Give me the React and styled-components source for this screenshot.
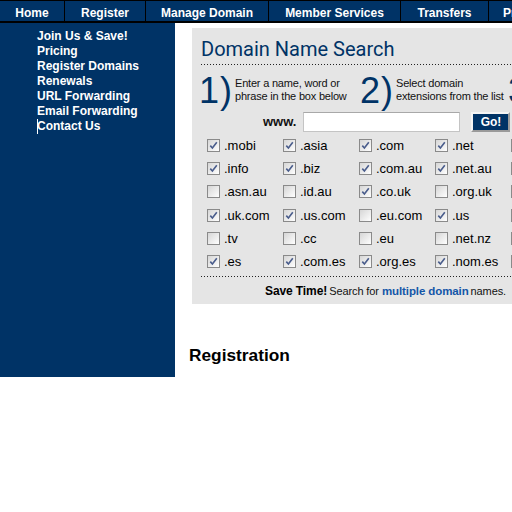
import React from "react";
import styled, { createGlobalStyle } from "styled-components";

const Global = createGlobalStyle`
  html, body { margin: 0; padding: 0; background: #fff; }
  body { font-family: "Liberation Sans", Arial, sans-serif; }
`;

const Page = styled.div`
  width: 100%;
  overflow: hidden;
`;

const NavBar = styled.nav`
  display: flex;
  background: #003366;
  border-top: 1px solid #000;
  border-bottom: 2px solid #000;
  height: 20px;
  white-space: nowrap;
`;

const NavItem = styled.a`
  flex-shrink: 0;
  display: flex;
  align-items: center;
  justify-content: center;
  box-sizing: border-box;
  width: ${(p) => (p.$w ? `${p.$w + 1}px` : "auto")};
  padding: ${(p) => (p.$w ? "3px 0 0" : "3px 14px 0")};
  height: 20px;
  border-right: 1px solid #000;
  color: #fff;
  font: bold 12px "Liberation Sans", Arial, sans-serif;
  text-decoration: none;
`;

const Body = styled.div`
  display: flex;
  min-height: 354px;
`;

const Sidebar = styled.aside`
  flex: 0 0 175px;
  background: #003366;
  padding: 6px 0 0 37px;
  box-sizing: border-box;
`;

const SideLink = styled.a`
  display: block;
  position: relative;
  color: #fff;
  font: bold 12px/15px "Liberation Sans", Arial, sans-serif;
  text-decoration: none;
  ${(p) =>
    p.$caret &&
    `&::before {
      content: "";
      position: absolute;
      left: 0;
      top: 0;
      width: 1px;
      height: 15px;
      background: #fff;
    }`}
`;

const Content = styled.main`
  flex: 1 0 auto;
  padding: 5px 0 0 14px;
`;

const Panel = styled.section`
  width: 420px;
  margin-left: 3px;
  background: #e5e5e5;
  padding: 9px 9px 6px;
  box-sizing: border-box;
`;

const Title = styled.h1`
  margin: 0;
  padding-bottom: 3px;
  font: normal 20px/24px Roboto, "Liberation Sans", sans-serif;
  color: #003366;
`;

const Dots = styled.div`
  height: 1px;
  margin-top: ${(p) => p.$mt || 0}px;
  background: repeating-linear-gradient(to right, #222 0 1px, transparent 1px 3px);
`;

const Steps = styled.div`
  display: grid;
  grid-template-columns: 161px 148px 200px;
  margin-top: 8px;
  margin-left: -2px;
`;

const Step = styled.div`
  display: flex;
  align-items: flex-start;
`;

const StepNum = styled.span`
  font: normal 36px/36px "Liberation Sans", Arial, sans-serif;
  color: #003366;
  white-space: nowrap;
`;

const Paren = styled.span`
  font-weight: 300;
  margin-left: 1px;
`;

const StepText = styled.span`
  margin: 4px 0 0 3px;
  font: normal 11px/13px "Liberation Sans", Arial, sans-serif;
  letter-spacing: -0.2px;
  color: #111;
  white-space: nowrap;
`;

const WwwRow = styled.div`
  display: flex;
  align-items: center;
  padding-left: 62px;
  margin-top: 2px;
`;

const WwwLabel = styled.label`
  font: bold 13px "Liberation Sans", Arial, sans-serif;
  color: #111;
  margin-right: 7px;
`;

const SearchInput = styled.input`
  box-sizing: border-box;
  width: 157px;
  height: 20px;
  border: 1px solid #c4c4c4;
  border-top-color: #a8a8a8;
  background: #fff;
  padding: 0 3px;
  margin: 0;
`;

const GoButton = styled.button`
  box-sizing: border-box;
  width: 39px;
  height: 20px;
  margin: 1px 0 0 11px;
  padding: 0;
  background: #003366;
  color: #fff;
  font: bold 12px "Liberation Sans", Arial, sans-serif;
  border: 2px solid;
  border-color: #f4f4f4 #9a9a9a #9a9a9a #f4f4f4;
`;

const ExtGrid = styled.div`
  display: grid;
  grid-template-columns: repeat(5, 76px);
  grid-auto-rows: 23.2px;
  margin: 2px 0 0 6px;
`;

const ExtCell = styled.label`
  display: flex;
  align-items: center;
  gap: 4px;
  font: normal 13px "Liberation Sans", Arial, sans-serif;
  color: #000;
  white-space: nowrap;
`;

const Box = styled.span`
  flex: 0 0 auto;
  width: 11px;
  height: 11px;
  border: 1px solid #8a8a8a;
  background: linear-gradient(135deg, #d6d6d6 0%, #f2f2f2 70%, #ffffff 100%);
  display: flex;
  align-items: center;
  justify-content: center;
`;

const Tip = styled.p`
  margin: 0;
  padding: 7px 0 0 64px;
  font: normal 11px/14px "Liberation Sans", Arial, sans-serif;
  letter-spacing: -0.1px;
  color: #111;
  white-space: nowrap;
`;

const Strong = styled.b`
  font-size: ${(p) => (p.$c ? 11.5 : 12)}px;
  color: ${(p) => p.$c || "#000"};
  margin: 0 2px 0 ${(p) => (p.$c ? 3 : 0)}px;
`;

const Heading = styled.h2`
  margin: 41px 0 0;
  font: bold 17.3px/20px "Liberation Sans", Arial, sans-serif;
  color: #000;
`;

const Check = ({ on }) => (
  <Box>
    {on && (
      <svg width="9" height="9" viewBox="0 0 9 9">
        <path d="M1.3 4.6 L3.4 7 L7.8 1.2" fill="none" stroke="#4a5d8c" strokeWidth="1.6" />
      </svg>
    )}
  </Box>
);

const navItems = [
  { label: "Home", w: 64 },
  { label: "Register", w: 80 },
  { label: "Manage Domain", w: 122 },
  { label: "Member Services", w: 131 },
  { label: "Transfers", w: 87 },
  { label: "Promotions" },
];

const sideLinks = [
  "Join Us & Save!",
  "Pricing",
  "Register Domains",
  "Renewals",
  "URL Forwarding",
  "Email Forwarding",
  "Contact Us",
];

const rows = [
  [[".mobi", 1], [".asia", 1], [".com", 1], [".net", 1], [".org", 1]],
  [[".info", 1], [".biz", 1], [".com.au", 1], [".net.au", 1], [".org.au", 1]],
  [[".asn.au", 0], [".id.au", 0], [".co.uk", 1], [".org.uk", 0], [".me.uk", 0]],
  [[".uk.com", 1], [".us.com", 1], [".eu.com", 0], [".us", 1], [".ws", 0]],
  [[".tv", 0], [".cc", 0], [".eu", 0], [".net.nz", 0], [".co.nz", 0]],
  [[".es", 1], [".com.es", 1], [".org.es", 1], [".nom.es", 1], [".be", 0]],
];

const steps = [
  ["1", ["Enter a name, word or", "phrase in the box below"]],
  ["2", ["Select domain", "extensions from the list"]],
  ["3", ["Click the Go! button", "to check availability"]],
];

export default function App() {
  return (
    <Page>
      <Global />
      <NavBar>
        {navItems.map((n) => (
          <NavItem key={n.label} href="#" $w={n.w}>
            {n.label}
          </NavItem>
        ))}
      </NavBar>
      <Body>
        <Sidebar>
          {sideLinks.map((s, i) => (
            <SideLink key={s} href="#" $caret={i === sideLinks.length - 1}>
              {s}
            </SideLink>
          ))}
        </Sidebar>
        <Content>
          <Panel>
            <Title>Domain Name Search</Title>
            <Dots />
            <Steps>
              {steps.map(([n, lines]) => (
                <Step key={n}>
                  <StepNum>
                    {n}
                    <Paren>)</Paren>
                  </StepNum>
                  <StepText>
                    {lines[0]}
                    <br />
                    {lines[1]}
                  </StepText>
                </Step>
              ))}
            </Steps>
            <WwwRow>
              <WwwLabel>www.</WwwLabel>
              <SearchInput type="text" />
              <GoButton>Go!</GoButton>
            </WwwRow>
            <ExtGrid>
              {rows.flat().map(([name, on]) => (
                <ExtCell key={name}>
                  <Check on={!!on} />
                  {name}
                </ExtCell>
              ))}
            </ExtGrid>
            <Dots $mt={3} />
            <Tip>
              <Strong>Save Time!</Strong>Search for
              <Strong $c="#1456a8">multiple domain</Strong>names.
            </Tip>
          </Panel>
          <Heading>Registration</Heading>
        </Content>
      </Body>
    </Page>
  );
}
